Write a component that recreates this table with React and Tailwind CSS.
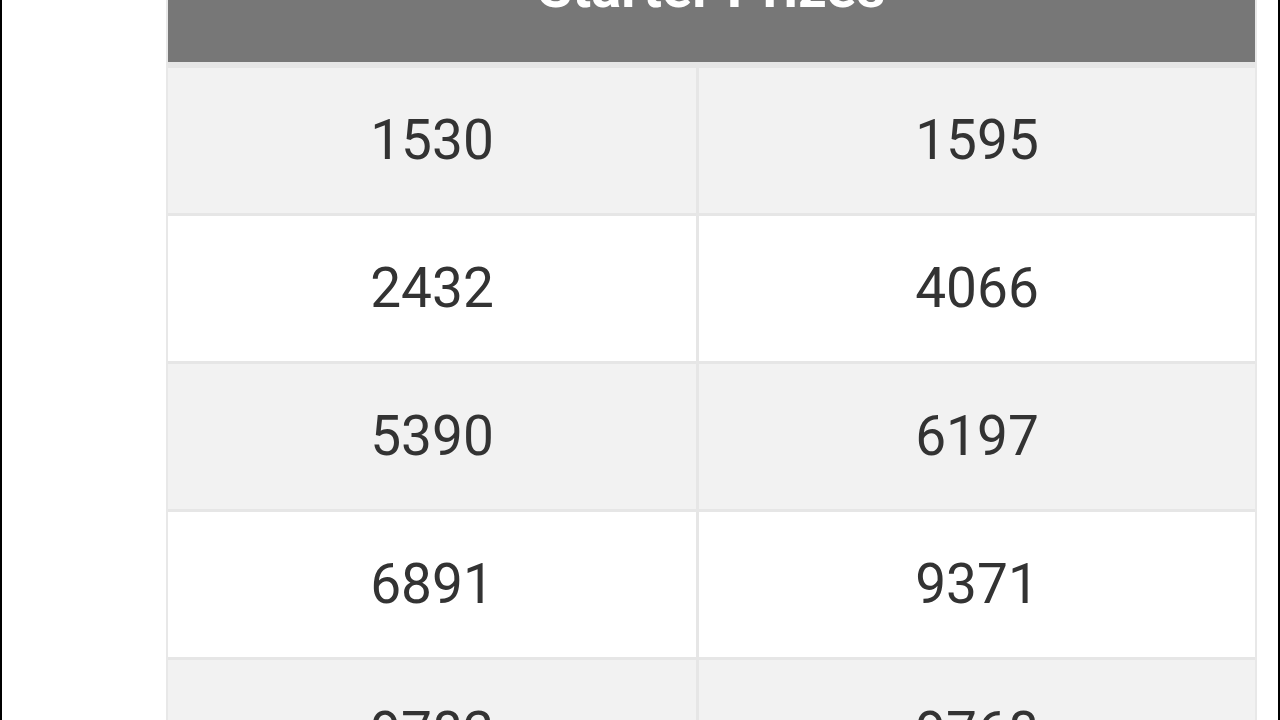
const rows = [
  ["1530", "1595"],
  ["2432", "4066"],
  ["5390", "6197"],
  ["6891", "9371"],
  ["9782", "9768"],
];

export default function App() {
  return (
    <div
      className="h-[720px] w-full overflow-hidden border-x-2 border-black bg-white"
      style={{ fontFamily: "Roboto, 'Noto Sans', sans-serif" }}
    >
      <div className="ml-[164px] -mt-[86px] w-[1091px] border-x-2 border-b-2 border-[#e8e8e8] bg-[#e6e6e6]">
        {/* header */}
        <div className="flex h-[148px] items-center justify-center bg-[#777777] text-[56px] font-bold leading-none text-white">
          Starter Prizes
        </div>

        <div className="mt-[6px] flex flex-col gap-[3px]">
          {rows.map((row, i) => (
            <div key={i} className="grid grid-cols-[528px_1fr] gap-[3px]">
              {row.map((n) => (
                <div
                  key={n}
                  className={`flex h-[145px] items-center justify-center text-[55px] leading-none text-[#333333] ${
                    i % 2 === 0 ? "bg-[#f2f2f2]" : "bg-white"
                  }`}
                >
                  {n}
                </div>
              ))}
            </div>
          ))}
        </div>
      </div>
    </div>
  );
}
